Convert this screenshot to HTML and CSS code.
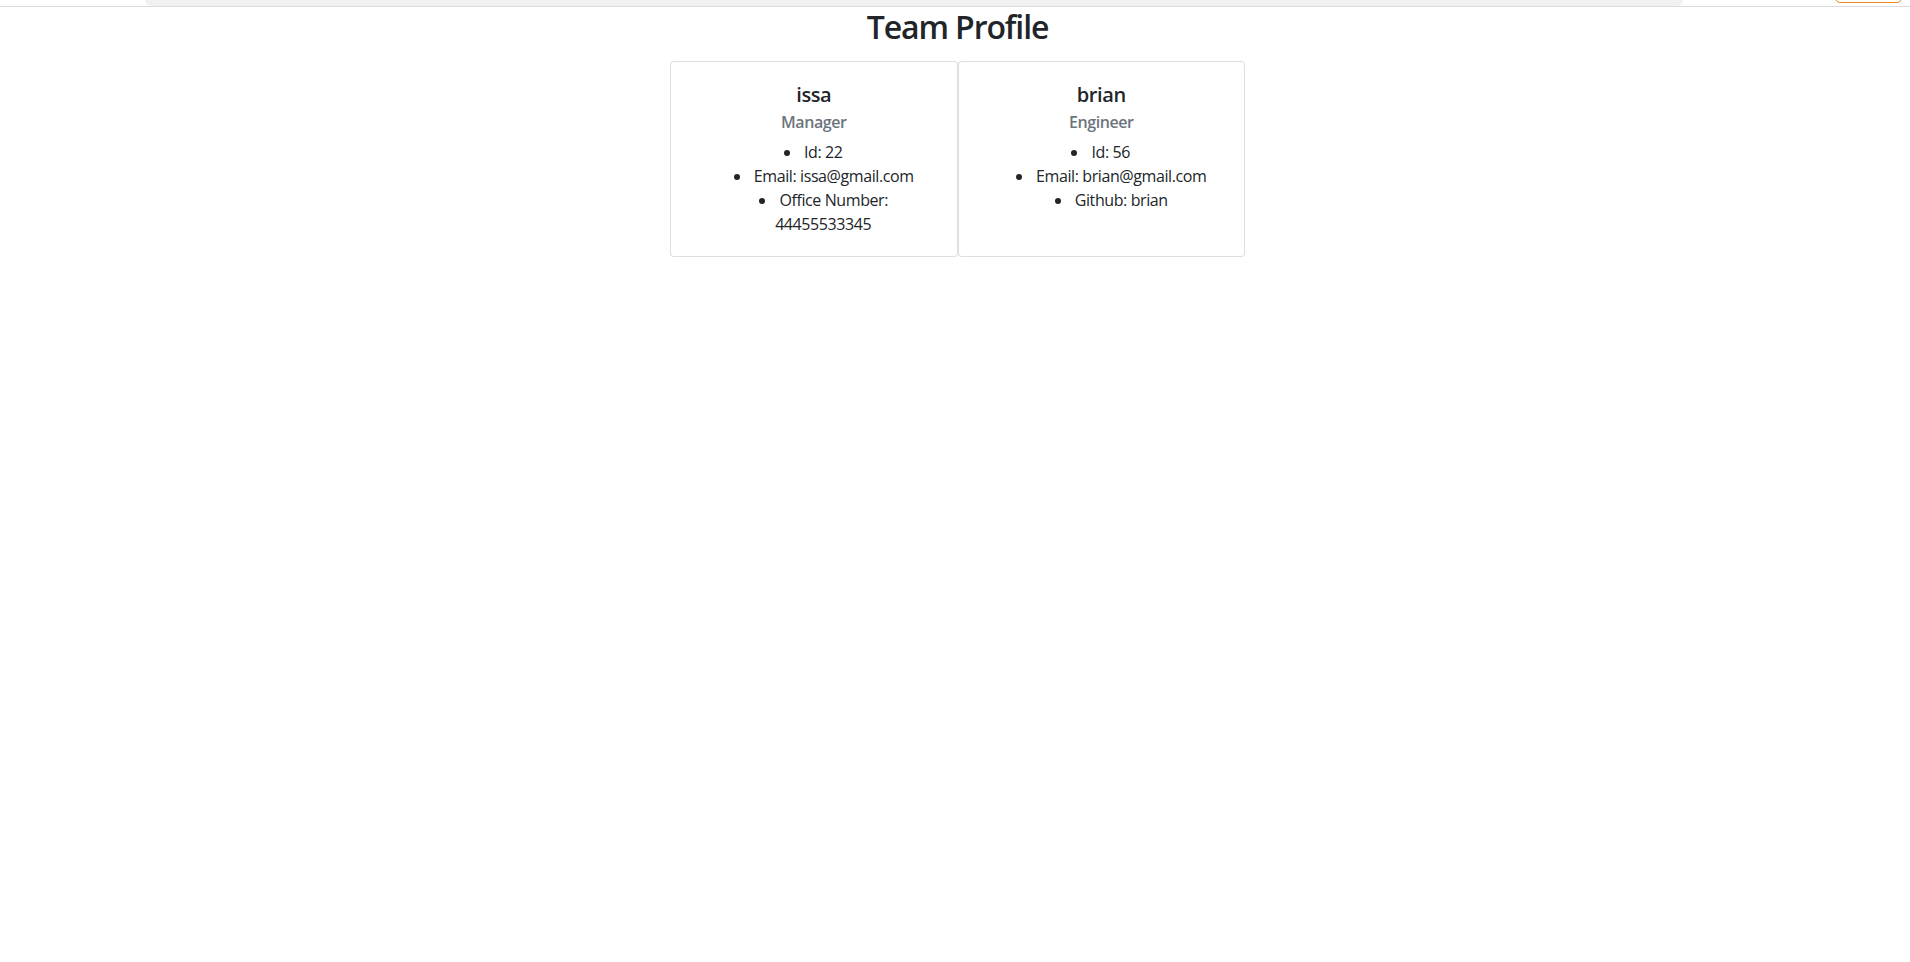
FILE: index.html
```html
<!DOCTYPE html>
<html lang="en">
<head>
<meta charset="utf-8">
<title>Team Profile</title>
<link rel="stylesheet" href="styles.css">
</head>
<body>
<div class="toolbar">
  <div class="toolbar-field"></div>
  <div class="toolbar-button"></div>
</div>
<main class="page">
  <h2 class="page-title">Team Profile</h2>
  <div class="card-row">
    <div class="card">
      <div class="card-body">
        <h5 class="card-title">issa</h5>
        <h6 class="card-subtitle">Manager</h6>
        <ul class="card-text">
          <li><span class="item trail">Id: 22</span></li>
          <li><span class="item">Email: issa@gmail.com</span></li>
          <li><span class="item">Office Number:<br><span class="trail">44455533345</span></span></li>
        </ul>
      </div>
    </div>
    <div class="card">
      <div class="card-body">
        <h5 class="card-title">brian</h5>
        <h6 class="card-subtitle">Engineer</h6>
        <ul class="card-text">
          <li><span class="item trail">Id: 56</span></li>
          <li><span class="item">Email: brian@gmail.com</span></li>
          <li><span class="item">Github: brian</span></li>
        </ul>
      </div>
    </div>
  </div>
</main>
</body>
</html>
```
FILE: styles.css
```css
* { box-sizing: border-box; }
html, body { margin: 0; padding: 0; background: #fff; }
body {
  font-family: "Open Sans", "Noto Sans", "Liberation Sans", sans-serif;
  font-size: 16px;
  line-height: 1.5;
  color: #212529;
}
.toolbar {
  height: 7px;
  border-bottom: 1px solid #dadada;
  position: relative;
  overflow: hidden;
}
.toolbar-field {
  position: absolute;
  left: 145px;
  width: 1538px;
  top: -10px;
  height: 16px;
  background: #f1f1f1;
  border-radius: 0 0 6px 6px;
}
.toolbar-button {
  position: absolute;
  left: 1835px;
  width: 67px;
  top: -10px;
  height: 13px;
  border: 1px solid #e8891d;
  border-radius: 0 0 5px 5px;
}
.page {
  padding-left: 5px;
  text-align: center;
}
.page-title {
  margin: 1px 0 15px;
  font-size: 32px;
  font-weight: 600;
  line-height: 1.2;
  letter-spacing: -1.1px;
}
.card-row {
  display: flex;
  justify-content: center;
}
.card {
  width: 287.5px;
  border: 1px solid rgba(0,0,0,.125);
  border-radius: 4px;
  background: #fff;
}
.card-body {
  padding: 21px 20px 20px;
  letter-spacing: -0.4px;
}
.card-title {
  margin: 0 0 12px;
  font-size: 20px;
  font-weight: 600;
  line-height: 1.2;
}
.card-subtitle {
  margin: -6px 0 7px;
  font-size: 16px;
  font-weight: 600;
  line-height: 1.2;
  color: #6c757d;
}
.card-text {
  margin: 0;
  padding-left: 40px;
  list-style: none;
}
.item {
  position: relative;
}
.item::before {
  content: "";
  position: absolute;
  left: -20px;
  top: 9px;
  width: 6px;
  height: 6px;
  border-radius: 50%;
  background: #212529;
}
.trail {
  padding-right: 21px;
}
```
